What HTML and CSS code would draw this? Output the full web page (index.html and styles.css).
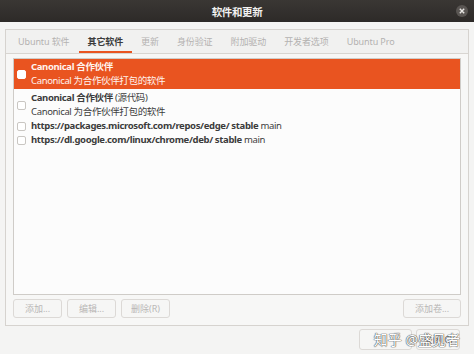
FILE: index.html
```html
<!DOCTYPE html>
<html lang="zh-CN">
<head>
  <meta charset="UTF-8">
  <title>软件和更新</title>
  <link rel="stylesheet" href="styles.css">
</head>
<body>
  <div class="titlebar">
    <span class="title">软件和更新</span>
    <span class="close">
      <svg width="12" height="12" viewBox="0 0 12 12"><circle cx="6" cy="6" r="6" fill="#5a5653"/><path d="M3.8 3.8 L8.2 8.2 M8.2 3.8 L3.8 8.2" stroke="#e8e6e3" stroke-width="1.4"/></svg>
    </span>
  </div>

  <div class="window">
    <div class="notebook">
      <div class="tabs">
        <span class="tab">Ubuntu 软件</span>
        <span class="tab active">其它软件</span>
        <span class="tab">更新</span>
        <span class="tab">身份验证</span>
        <span class="tab">附加驱动</span>
        <span class="tab">开发者选项</span>
        <span class="tab">Ubuntu Pro</span>
      </div>
      <div class="page">
        <div class="list">
          <div class="row selected">
            <span class="check"></span>
            <div class="label">
              <div><b>Canonical 合作伙伴</b></div>
              <div>Canonical 为合作伙伴打包的软件</div>
            </div>
          </div>
          <div class="row double">
            <span class="check"></span>
            <div class="label">
              <div><b>Canonical 合作伙伴</b> (源代码)</div>
              <div>Canonical 为合作伙伴打包的软件</div>
            </div>
          </div>
          <div class="row single">
            <span class="check"></span>
            <div class="label"><b>https://packages.microsoft.com/repos/edge/ stable</b> main</div>
          </div>
          <div class="row single">
            <span class="check"></span>
            <div class="label"><b>https://dl.google.com/linux/chrome/deb/ stable</b> main</div>
          </div>
        </div>
        <div class="actions">
          <button>添加...</button>
          <button>编辑...</button>
          <button>删除(R)</button>
          <span class="spacer"></span>
          <button class="wide">添加卷...</button>
        </div>
      </div>
    </div>
    <div class="footer">
      <button class="foot revert">还原(V)</button>
      <button class="foot">关闭(C)</button>
      <span class="watermark">知乎 @盛见者</span>
    </div>
  </div>
</body>
</html>
```

FILE: styles.css
```css
body {
  margin: 0;
  width: 474px;
  height: 354px;
  overflow: hidden;
  background: #f4f4f3;
  font-family: "Noto Sans", "Noto Sans CJK SC", sans-serif;
  font-size: 9.5px;
  letter-spacing: -0.35px;
  color: #3c3c3c;
}

.titlebar {
  height: 22px;
  background: linear-gradient(#3a3734, #2d2a28);
  color: #f2f1f0;
  position: relative;
  display: flex;
  align-items: center;
  justify-content: center;
}

.title {
  font-weight: bold;
  font-size: 10.5px;
}

.close {
  position: absolute;
  right: 6px;
  top: 5px;
  height: 12px;
}

.window {
  padding: 7px 5px 0 5px;
}

.notebook {
  border: 1px solid #d6d3cf;
  background: #f7f7f6;
}

.tabs {
  display: flex;
  height: 23px;
  padding-left: 3px;
  border-bottom: 1px solid #d8d5d1;
  background: #f1f1f0;
}

.tab {
  padding: 0 9px;
  line-height: 23px;
  color: #b4b2b0;
  font-size: 9px;
  letter-spacing: -0.1px;
  white-space: nowrap;
}

.tab.active {
  color: #3b3b3b;
  font-weight: bold;
  box-shadow: inset 0 -2px #e95420;
}

.page {
  padding: 4px 7px 7px 7px;
}

.list {
  height: 235px;
  border: 1px solid #cfccc8;
  background: #fcfcfc;
}

.row {
  display: flex;
  align-items: center;
  padding-left: 2px;
  line-height: 14px;
}

.row.selected {
  background: #e95420;
  color: #fff3ee;
  height: 30px;
}

.row.double {
  padding-top: 2px;
}

.check {
  width: 7px;
  height: 7px;
  border: 1px solid #c9c6c2;
  border-radius: 2px;
  background: #fff;
  margin: 0 5px 0 1px;
  flex: none;
}

.selected .check {
  border-color: #fff;
}

.label b {
  font-weight: bold;
}

.actions {
  display: flex;
  gap: 5px;
  margin-top: 4px;
}

.spacer {
  flex: 1;
}

button {
  width: 49px;
  height: 19px;
  padding: 0;
  font-family: inherit;
  font-size: 9px;
  letter-spacing: 0;
  color: #b9b7b5;
  background: #f6f6f5;
  border: 1px solid #dcd9d6;
  border-radius: 3px;
}

button.wide {
  width: 58px;
}

.footer {
  position: relative;
  display: flex;
  justify-content: flex-end;
  gap: 4px;
  padding: 3px 9px 0 0;
}

button.foot {
  width: 44px;
  height: 21px;
  color: #6a6866;
}

button.revert {
  width: 53px;
  color: #f4f4f3;
}

.watermark {
  position: absolute;
  right: 9px;
  top: 3px;
  font-size: 14px;
  letter-spacing: 0;
  color: #fff;
  text-shadow: 0 0 1px #555, 0 0 1px #555, 0 0 1px #555;
  white-space: nowrap;
}
```
